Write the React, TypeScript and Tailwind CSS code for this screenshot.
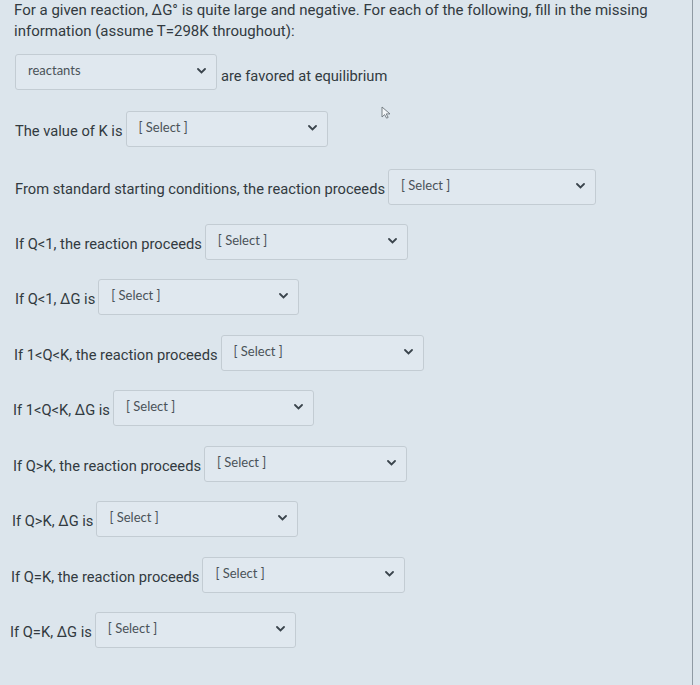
const rows = [
  { label: 'The value of K is', w: 202, mt: 21, ml: 15 },
  { label: 'From standard starting conditions, the reaction proceeds', w: 208, mt: 22, ml: 15 },
  { label: 'If Q<1, the reaction proceeds', w: 203, mt: 19, ml: 15 },
  { label: 'If Q<1, ΔG is', w: 201, mt: 19, ml: 15 },
  { label: 'If 1<Q<K, the reaction proceeds', w: 203, mt: 20, ml: 14 },
  { label: 'If 1<Q<K, ΔG is', w: 201, mt: 19, ml: 13 },
  { label: 'If Q>K, the reaction proceeds', w: 203, mt: 20, ml: 13 },
  { label: 'If Q>K, ΔG is', w: 202, mt: 19, ml: 12 },
  { label: 'If Q=K, the reaction proceeds', w: 203, mt: 20, ml: 11 },
  { label: 'If Q=K, ΔG is', w: 201, mt: 19, ml: 10 },
];

const Chevron = () => (
  <svg width="9" height="6" viewBox="0 0 9 6" className="shrink-0">
    <path d="M1 1l3.5 3.5L8 1" fill="none" stroke="#3a444c" strokeWidth="1.8" strokeLinecap="round" />
  </svg>
);

const FakeSelect = ({ value, width }: { value: string; width: number }) => (
  <div
    className="h-[36px] shrink-0 flex items-center justify-between pl-3 pr-[10px] pb-[3px] border border-[#c3ccd3] rounded-[3px] bg-[#e0e8ef] text-[13px] text-[#4a5258] font-['Lato',sans-serif]"
    style={{ width }}
  >
    <span>{value}</span>
    <Chevron />
  </div>
);

export default function App() {
  return (
    <div className="relative w-[700px] h-[685px] overflow-hidden bg-[#dce5ec] text-[#323a40] font-['Roboto',sans-serif]">
      {/* right edge of the quiz panel */}
      <div className="absolute top-0 bottom-0 left-[692px] w-px bg-[#8f9aa3]" />

      {/* mouse pointer */}
      <svg className="absolute left-[381px] top-[106px]" width="11" height="13" viewBox="0 0 11 13">
        <path d="M1 1v10l2.6-2.4 2 3.6 1.6-.8-2-3.5H9z" fill="#f3f6f8" stroke="#6b747b" strokeWidth="0.9" strokeLinejoin="round" />
      </svg>

      <div className="pl-[14px] pr-[20px] text-[15px] leading-[21px]">
        For a given reaction, ΔG° is quite large and negative. For each of the following, fill in the missing
        information (assume T=298K throughout):
      </div>

      <div className="flex items-center gap-[4px] ml-[15px] mt-[12px]">
        <FakeSelect value="reactants" width={202} />
        <span className="text-[14.7px] mt-[8px]">are favored at equilibrium</span>
      </div>

      {rows.map((r) => (
        <div key={r.label} className="flex items-center gap-[3px]" style={{ marginTop: r.mt, marginLeft: r.ml }}>
          <span className="text-[14.7px] mt-[5px] whitespace-nowrap">{r.label}</span>
          <FakeSelect value="[ Select ]" width={r.w} />
        </div>
      ))}
    </div>
  );
}
